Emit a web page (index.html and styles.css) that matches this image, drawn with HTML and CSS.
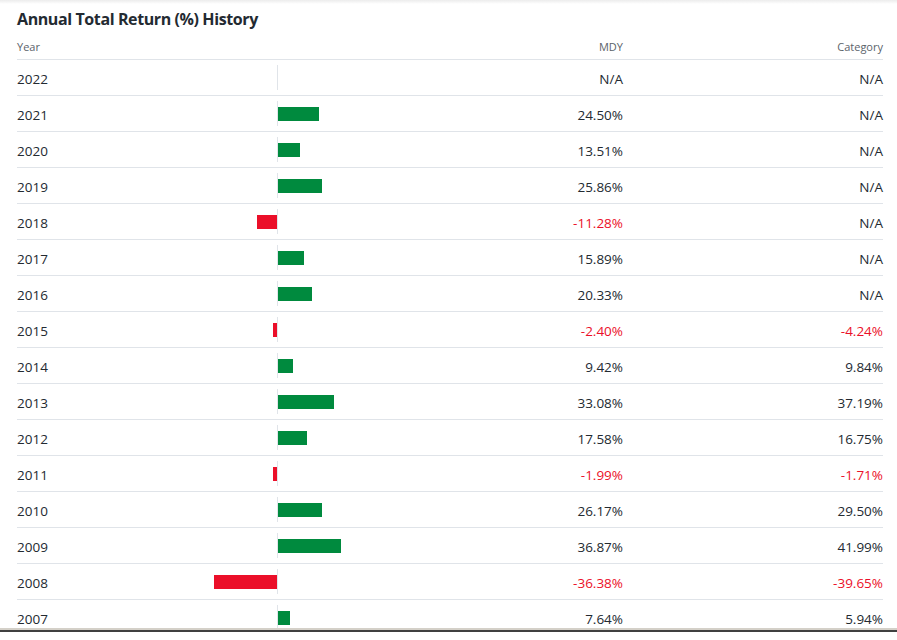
FILE: index.html
```html
<!DOCTYPE html>
<html lang="en">
<head>
<meta charset="utf-8">
<title>Annual Total Return (%) History</title>
<link rel="stylesheet" href="styles.css">
</head>
<body>
<div class="topshade"></div>
<section class="panel">
  <h2 class="title">Annual Total Return (%) History</h2>
  <div class="table">
    <div class="row head">
      <div class="c-year">Year</div>
      <div class="c-bar"></div>
      <div class="c-num">MDY</div>
      <div class="c-num">Category</div>
    </div>
    <div class="row"><div class="c-year">2022</div><div class="c-bar"><div class="neg"></div><div class="axis"></div><div class="pos"></div></div><div class="c-num">N/A</div><div class="c-num">N/A</div></div>
    <div class="row"><div class="c-year">2021</div><div class="c-bar"><div class="neg"></div><div class="axis"></div><div class="pos"><span class="bar up" style="width:41px"></span></div></div><div class="c-num">24.50%</div><div class="c-num">N/A</div></div>
    <div class="row"><div class="c-year">2020</div><div class="c-bar"><div class="neg"></div><div class="axis"></div><div class="pos"><span class="bar up" style="width:22px"></span></div></div><div class="c-num">13.51%</div><div class="c-num">N/A</div></div>
    <div class="row"><div class="c-year">2019</div><div class="c-bar"><div class="neg"></div><div class="axis"></div><div class="pos"><span class="bar up" style="width:44px"></span></div></div><div class="c-num">25.86%</div><div class="c-num">N/A</div></div>
    <div class="row"><div class="c-year">2018</div><div class="c-bar"><div class="neg"><span class="bar down" style="width:20px"></span></div><div class="axis"></div><div class="pos"></div></div><div class="c-num down-t">-11.28%</div><div class="c-num">N/A</div></div>
    <div class="row"><div class="c-year">2017</div><div class="c-bar"><div class="neg"></div><div class="axis"></div><div class="pos"><span class="bar up" style="width:26px"></span></div></div><div class="c-num">15.89%</div><div class="c-num">N/A</div></div>
    <div class="row"><div class="c-year">2016</div><div class="c-bar"><div class="neg"></div><div class="axis"></div><div class="pos"><span class="bar up" style="width:34px"></span></div></div><div class="c-num">20.33%</div><div class="c-num">N/A</div></div>
    <div class="row"><div class="c-year">2015</div><div class="c-bar"><div class="neg"><span class="bar down" style="width:4px"></span></div><div class="axis"></div><div class="pos"></div></div><div class="c-num down-t">-2.40%</div><div class="c-num down-t">-4.24%</div></div>
    <div class="row"><div class="c-year">2014</div><div class="c-bar"><div class="neg"></div><div class="axis"></div><div class="pos"><span class="bar up" style="width:15px"></span></div></div><div class="c-num">9.42%</div><div class="c-num">9.84%</div></div>
    <div class="row"><div class="c-year">2013</div><div class="c-bar"><div class="neg"></div><div class="axis"></div><div class="pos"><span class="bar up" style="width:56px"></span></div></div><div class="c-num">33.08%</div><div class="c-num">37.19%</div></div>
    <div class="row"><div class="c-year">2012</div><div class="c-bar"><div class="neg"></div><div class="axis"></div><div class="pos"><span class="bar up" style="width:29px"></span></div></div><div class="c-num">17.58%</div><div class="c-num">16.75%</div></div>
    <div class="row"><div class="c-year">2011</div><div class="c-bar"><div class="neg"><span class="bar down" style="width:4px"></span></div><div class="axis"></div><div class="pos"></div></div><div class="c-num down-t">-1.99%</div><div class="c-num down-t">-1.71%</div></div>
    <div class="row"><div class="c-year">2010</div><div class="c-bar"><div class="neg"></div><div class="axis"></div><div class="pos"><span class="bar up" style="width:44px"></span></div></div><div class="c-num">26.17%</div><div class="c-num">29.50%</div></div>
    <div class="row"><div class="c-year">2009</div><div class="c-bar"><div class="neg"></div><div class="axis"></div><div class="pos"><span class="bar up" style="width:63px"></span></div></div><div class="c-num">36.87%</div><div class="c-num">41.99%</div></div>
    <div class="row"><div class="c-year">2008</div><div class="c-bar"><div class="neg"><span class="bar down" style="width:63px"></span></div><div class="axis"></div><div class="pos"></div></div><div class="c-num down-t">-36.38%</div><div class="c-num down-t">-39.65%</div></div>
    <div class="row"><div class="c-year">2007</div><div class="c-bar"><div class="neg"></div><div class="axis"></div><div class="pos"><span class="bar up" style="width:12px"></span></div></div><div class="c-num">7.64%</div><div class="c-num">5.94%</div></div>
  </div>
</section>
<div class="bottom-edge"></div>
</body>
</html>
```
FILE: styles.css
```css
html, body {
  margin: 0;
  padding: 0;
  background: #fff;
  height: 640px;
  overflow: hidden;
}
body {
  font-family: "Open Sans", "Liberation Sans", sans-serif;
  color: #232a31;
}
.topshade {
  height: 4px;
  background: linear-gradient(#ececec, #ffffff);
}
.panel {
  padding: 0 14px 0 17px;
}
.title {
  margin: 4px 0 0 0;
  font-size: 16px;
  line-height: 22px;
  font-weight: 700;
  letter-spacing: -0.4px;
  color: #232a31;
}
.table {
  width: 866px;
}
.row {
  display: grid;
  grid-template-columns: 160px 201px 245px 260px;
  align-items: center;
  height: 35px;
  border-bottom: 1px solid #e0e4e9;
  font-size: 13.5px;
}
.row .c-year,
.row .c-num {
  padding-top: 2px;
}
.row.head {
  height: 20px;
  margin-top: 9px;
  font-size: 11px;
  line-height: 15px;
  color: #5b636a;
  align-items: start;
}
.row.head .c-year,
.row.head .c-num {
  padding-top: 0;
}
.c-num {
  text-align: right;
}
.down-t {
  color: #eb0f29;
}
.c-bar {
  display: flex;
  align-items: center;
  height: 100%;
  padding: 5px 0;
  box-sizing: border-box;
}
.neg, .pos {
  flex: 1 1 0;
  display: flex;
  align-items: center;
}
.neg {
  justify-content: flex-end;
}
.axis {
  width: 1px;
  align-self: stretch;
  background: #e0e4e9;
}
.bar {
  display: block;
  height: 14px;
}
.bar.up {
  background: #008a3e;
}
.bar.down {
  background: #eb0f29;
}
.bottom-edge {
  position: fixed;
  left: 0;
  right: 0;
  top: 628px;
  height: 12px;
  background: #fff;
  border-top: 2px solid #d4d0c8;
  box-shadow: inset 0 2px 0 #404040;
  box-sizing: border-box;
}
```
